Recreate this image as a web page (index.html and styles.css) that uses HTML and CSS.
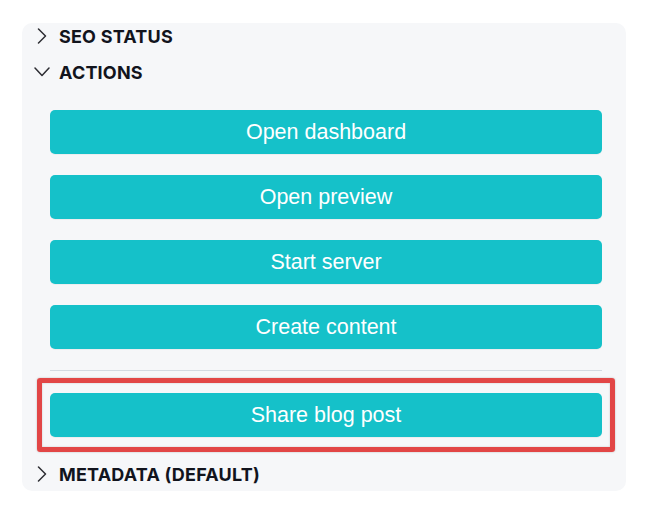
FILE: index.html
```html
<!DOCTYPE html>
<html lang="en">
<head>
<meta charset="utf-8">
<title>Actions</title>
<link rel="stylesheet" href="styles.css">
</head>
<body>
<div class="panel">
  <div class="section-header">
    <svg class="chev" viewBox="0 0 16 16" width="16" height="16"><polyline points="4.5,1 11.5,8 4.5,15"/></svg>
    <span class="section-title">SEO STATUS</span>
  </div>
  <div class="section-header gap-top">
    <svg class="chev" viewBox="0 0 16 16" width="16" height="16"><polyline points="1,4 8,11.5 15,4"/></svg>
    <span class="section-title">ACTIONS</span>
  </div>
  <div class="actions">
    <button class="action-btn">Open dashboard</button>
    <button class="action-btn">Open preview</button>
    <button class="action-btn">Start server</button>
    <button class="action-btn">Create content</button>
    <div class="divider"></div>
    <div class="highlight">
      <button class="action-btn">Share blog post</button>
    </div>
  </div>
  <div class="section-header last">
    <svg class="chev" viewBox="0 0 16 16" width="16" height="16"><polyline points="4.5,1 11.5,8 4.5,15"/></svg>
    <span class="section-title">METADATA (DEFAULT)</span>
  </div>
</div>
</body>
</html>
```
FILE: styles.css
```css
html, body {
  margin: 0;
  padding: 0;
  background: #ffffff;
}

.panel {
  margin: 23px 0 0 22px;
  width: 604px;
  height: 468px;
  box-sizing: border-box;
  background: #f6f7f9;
  border-radius: 10px;
  overflow: hidden;
  display: flex;
  flex-direction: column;
}

.section-header {
  height: 26px;
  display: flex;
  align-items: center;
  padding-left: 12px;
  gap: 9px;
}

.section-header.gap-top {
  margin-top: 10px;
}

.section-header.last {
  margin-top: 9px;
}

.chev {
  flex: none;
  fill: none;
  stroke: #2d2d33;
  stroke-width: 1.5;
  stroke-linecap: round;
  stroke-linejoin: round;
}

.section-title {
  font-family: Inter, "Noto Sans", sans-serif;
  font-weight: 700;
  font-size: 18px;
  letter-spacing: 0.2px;
  color: #12141d;
}

.actions {
  display: flex;
  flex-direction: column;
  gap: 21px;
  padding: 25px 24px 0 28px;
}

.action-btn {
  display: block;
  width: 100%;
  height: 44px;
  margin: 0;
  border: none;
  border-radius: 5px;
  background: #15c1c9;
  color: #ffffff;
  font-family: "Liberation Sans", Arial, sans-serif;
  font-size: 21.5px;
  padding: 0;
  box-shadow: 0 1px 0 rgba(0, 0, 0, 0.04);
}

.divider {
  height: 1px;
  background: #d3d9e1;
}

.highlight {
  margin: -14px -13px 0 -13px;
  border: 5px solid #e24646;
  border-radius: 3px;
  padding: 10px 8px;
  box-shadow: 0 0 2px rgba(0, 0, 0, 0.25), inset 0 0 2px rgba(0, 0, 0, 0.2);
}
```
